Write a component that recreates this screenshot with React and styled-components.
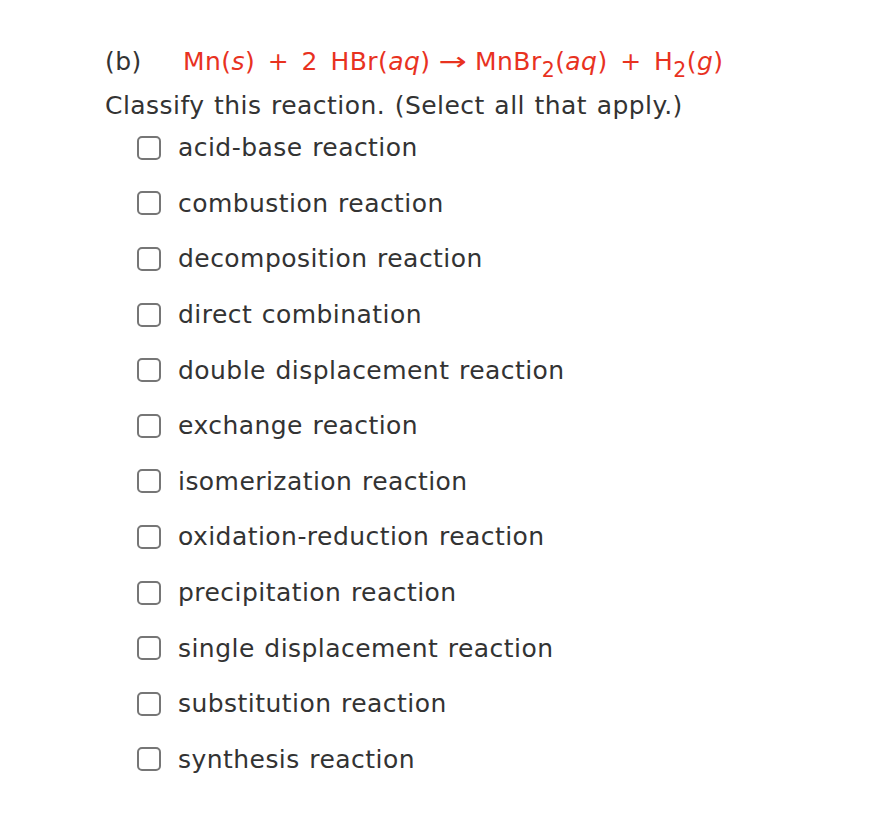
import React from "react";
import styled, { createGlobalStyle } from "styled-components";

const Global = createGlobalStyle`
  html, body { margin: 0; padding: 0; background: #fff; }
  body {
    font-family: Verdana, "DejaVu Sans", sans-serif;
    color: #333;
    letter-spacing: 0.45px;
    word-spacing: 1.2px;
  }
`;

const Page = styled.div`
  padding: 44px 0 0 105px;
`;

const Equation = styled.div`
  display: flex;
  align-items: baseline;
  font-size: 25px;
  line-height: 36px;
  color: #333;
`;

const Label = styled.span`
  width: 78px;
`;

const Red = styled.span`
  color: #e8321f;
  white-space: pre;
  word-spacing: 4.1px;
  i { font-style: italic; }
  sub { font-size: 0.82em; vertical-align: -0.32em; line-height: 0; }
`;

const Arrow = styled.span`
  display: inline-block;
  transform: scaleX(1.35);
  margin: 0 12px 0 11px;
`;

const Prompt = styled.div`
  font-size: 25px;
  line-height: 36px;
  margin-top: 8px;
`;

const List = styled.div`
  display: flex;
  flex-direction: column;
  padding-left: 32px;
  margin-top: 6px;
`;

const Option = styled.label`
  display: flex;
  align-items: center;
  height: 55.6px;
  font-size: 25px;
  margin-top: ${(p) => (p.$first ? "-10px" : "0")};
`;

const Box = styled.span`
  width: 20px;
  height: 20px;
  border: 2px solid #767676;
  border-radius: 5px;
  margin-right: 17px;
  flex: none;
`;

const options = [
  "acid-base reaction",
  "combustion reaction",
  "decomposition reaction",
  "direct combination",
  "double displacement reaction",
  "exchange reaction",
  "isomerization reaction",
  "oxidation-reduction reaction",
  "precipitation reaction",
  "single displacement reaction",
  "substitution reaction",
  "synthesis reaction",
];

export default function App() {
  return (
    <Page>
      <Global />
      <Equation>
        <Label>(b)</Label>
        <Red>
          Mn(<i>s</i>) + 2 HBr(<i>aq</i>)<Arrow>→</Arrow>MnBr<sub>2</sub>(<i>aq</i>) + H<sub>2</sub>(<i>g</i>)
        </Red>
      </Equation>
      <Prompt>Classify this reaction. (Select all that apply.)</Prompt>
      <List>
        {options.map((o, i) => (
          <Option key={o} $first={i === 0}>
            <Box />
            {o}
          </Option>
        ))}
      </List>
    </Page>
  );
}
